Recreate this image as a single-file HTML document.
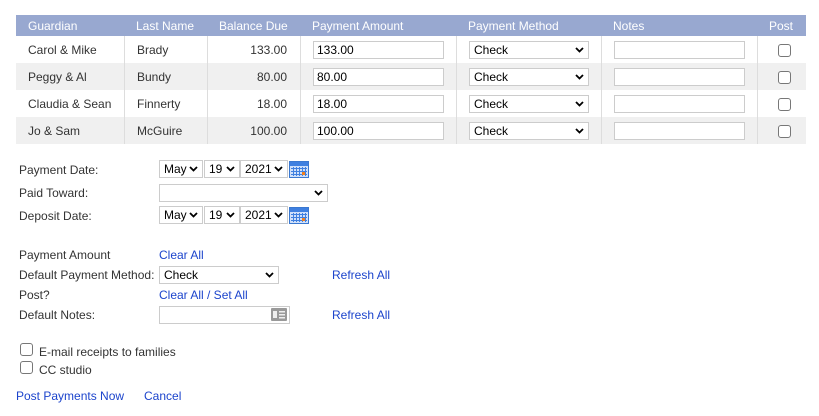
<!DOCTYPE html>
<html><head><style>
*{box-sizing:border-box;margin:0;padding:0}
body{width:819px;height:416px;background:#fff;font-family:"Liberation Sans",Arial,sans-serif;font-size:12px;color:#333;position:relative;overflow:hidden}
.a{position:absolute;white-space:nowrap}
.hdr{position:absolute;left:16px;top:15px;width:790px;height:21px;background:#98a8d0}
.hdr span{position:absolute;top:4px;color:#fff;font-size:12px}
.row{position:absolute;left:16px;width:790px;height:27px}
.vl{position:absolute;top:36px;height:108px;width:1px;background:#ddd}
.inp{position:absolute;height:18px;border:1px solid #ccc;background:#fff;font-size:12px;color:#000;padding:1px 3px;line-height:14px}
.sel{position:absolute;height:18px;border:1px solid #ccc;background:#fff;font-size:12px;color:#000;padding:1px 4px;line-height:14px}
.sel svg{position:absolute;right:4px;top:5px}
.cb{position:absolute;width:13px;height:13px;border:1px solid #777;border-radius:3px;background:#fff}
.lnk{color:#1c44cc}
</style></head><body>
<div class="hdr">
<span style="left:12px">Guardian</span><span style="left:120px">Last Name</span><span style="left:203px">Balance Due</span><span style="left:296px">Payment Amount</span><span style="left:452px">Payment Method</span><span style="left:597px">Notes</span><span style="left:753px">Post</span>
</div>
<div class="row" style="top:36px;background:#fff"></div>
<div class="row" style="top:63px;background:#f0f0f0"></div>
<div class="row" style="top:90px;background:#fff"></div>
<div class="row" style="top:117px;background:#f0f0f0"></div>
<div class="vl" style="left:124px"></div><div class="vl" style="left:207px"></div><div class="vl" style="left:300px"></div><div class="vl" style="left:456px"></div><div class="vl" style="left:601px"></div><div class="vl" style="left:757px"></div>

<div class="a" style="left:28px;top:43px">Carol &amp; Mike</div><div class="a" style="left:137px;top:43px">Brady</div><div class="a" style="right:532px;top:43px">133.00</div>
<div class="a" style="left:28px;top:70px">Peggy &amp; Al</div><div class="a" style="left:137px;top:70px">Bundy</div><div class="a" style="right:532px;top:70px">80.00</div>
<div class="a" style="left:28px;top:97px">Claudia &amp; Sean</div><div class="a" style="left:137px;top:97px">Finnerty</div><div class="a" style="right:532px;top:97px">18.00</div>
<div class="a" style="left:28px;top:124px">Jo &amp; Sam</div><div class="a" style="left:137px;top:124px">McGuire</div><div class="a" style="right:532px;top:124px">100.00</div>

<div class="inp" style="left:313px;top:41px;width:131px">133.00</div>
<div class="inp" style="left:313px;top:68px;width:131px">80.00</div>
<div class="inp" style="left:313px;top:95px;width:131px">18.00</div>
<div class="inp" style="left:313px;top:122px;width:131px">100.00</div>

<div class="sel" style="left:469px;top:41px;width:120px">Check<svg width="9" height="6"><path d="M1 1L4.5 4.5L8 1" stroke="#000" stroke-width="1.8" fill="none"/></svg></div>
<div class="sel" style="left:469px;top:68px;width:120px">Check<svg width="9" height="6"><path d="M1 1L4.5 4.5L8 1" stroke="#000" stroke-width="1.8" fill="none"/></svg></div>
<div class="sel" style="left:469px;top:95px;width:120px">Check<svg width="9" height="6"><path d="M1 1L4.5 4.5L8 1" stroke="#000" stroke-width="1.8" fill="none"/></svg></div>
<div class="sel" style="left:469px;top:122px;width:120px">Check<svg width="9" height="6"><path d="M1 1L4.5 4.5L8 1" stroke="#000" stroke-width="1.8" fill="none"/></svg></div>

<div class="inp" style="left:614px;top:41px;width:131px"></div>
<div class="inp" style="left:614px;top:68px;width:131px"></div>
<div class="inp" style="left:614px;top:95px;width:131px"></div>
<div class="inp" style="left:614px;top:122px;width:131px"></div>

<div class="cb" style="left:778px;top:44px"></div><div class="cb" style="left:778px;top:71px"></div><div class="cb" style="left:778px;top:98px"></div><div class="cb" style="left:778px;top:125px"></div>

<div class="a" style="left:19px;top:163px">Payment Date:</div>
<div class="a" style="left:19px;top:186px">Paid Toward:</div>
<div class="a" style="left:19px;top:209px">Deposit Date:</div>

<div class="sel" style="left:159px;top:160px;width:44px">May<svg width="9" height="6"><path d="M1 1L4.5 4.5L8 1" stroke="#000" stroke-width="1.8" fill="none"/></svg></div>
<div class="sel" style="left:204px;top:160px;width:36px">19<svg width="9" height="6"><path d="M1 1L4.5 4.5L8 1" stroke="#000" stroke-width="1.8" fill="none"/></svg></div>
<div class="sel" style="left:240px;top:160px;width:48px">2021<svg width="9" height="6"><path d="M1 1L4.5 4.5L8 1" stroke="#000" stroke-width="1.8" fill="none"/></svg></div>
<svg class="a" style="left:289px;top:161px" width="20" height="17"><rect x="0.5" y="0.5" width="19" height="16" fill="#cfe0fa" stroke="#3a78d0"/><rect x="1" y="1" width="18" height="4" fill="#3f80e0"/><g stroke="#3f80e0" stroke-width="1"><path d="M2 7.5H18M2 10.5H18M2 13.5H18M4.5 6V15M7.5 6V15M10.5 6V15M13.5 6V15M16.5 6V15"/></g><rect x="13" y="11" width="3" height="3" fill="#f08020"/></svg>
<div class="sel" style="left:159px;top:184px;width:169px"><svg width="9" height="6"><path d="M1 1L4.5 4.5L8 1" stroke="#000" stroke-width="1.8" fill="none"/></svg></div>
<div class="sel" style="left:159px;top:206px;width:44px">May<svg width="9" height="6"><path d="M1 1L4.5 4.5L8 1" stroke="#000" stroke-width="1.8" fill="none"/></svg></div>
<div class="sel" style="left:204px;top:206px;width:36px">19<svg width="9" height="6"><path d="M1 1L4.5 4.5L8 1" stroke="#000" stroke-width="1.8" fill="none"/></svg></div>
<div class="sel" style="left:240px;top:206px;width:48px">2021<svg width="9" height="6"><path d="M1 1L4.5 4.5L8 1" stroke="#000" stroke-width="1.8" fill="none"/></svg></div>
<svg class="a" style="left:289px;top:207px" width="20" height="17"><rect x="0.5" y="0.5" width="19" height="16" fill="#cfe0fa" stroke="#3a78d0"/><rect x="1" y="1" width="18" height="4" fill="#3f80e0"/><g stroke="#3f80e0" stroke-width="1"><path d="M2 7.5H18M2 10.5H18M2 13.5H18M4.5 6V15M7.5 6V15M10.5 6V15M13.5 6V15M16.5 6V15"/></g><rect x="13" y="11" width="3" height="3" fill="#f08020"/></svg>

<div class="a" style="left:19px;top:248px">Payment Amount</div>
<div class="a lnk" style="left:159px;top:248px">Clear All</div>
<div class="a" style="left:19px;top:268px">Default Payment Method:</div>
<div class="sel" style="left:159px;top:266px;width:120px">Check<svg width="9" height="6"><path d="M1 1L4.5 4.5L8 1" stroke="#000" stroke-width="1.8" fill="none"/></svg></div>
<div class="a lnk" style="left:332px;top:268px">Refresh All</div>
<div class="a" style="left:19px;top:288px">Post?</div>
<div class="a lnk" style="left:159px;top:288px">Clear All / Set All</div>
<div class="a" style="left:19px;top:308px">Default Notes:</div>
<div class="inp" style="left:159px;top:306px;width:131px"></div>
<svg class="a" style="left:271px;top:308px" width="16" height="13"><rect width="16" height="13" rx="1" fill="#999"/><rect x="2" y="3" width="4" height="7" fill="#eee"/><rect x="8" y="3" width="6" height="1.5" fill="#eee"/><rect x="8" y="6" width="6" height="1.5" fill="#eee"/><rect x="8" y="9" width="6" height="1.5" fill="#eee"/></svg>
<div class="a lnk" style="left:332px;top:308px">Refresh All</div>

<div class="cb" style="left:20px;top:343px"></div>
<div class="a" style="left:39px;top:345px">E-mail receipts to families</div>
<div class="cb" style="left:20px;top:361px"></div>
<div class="a" style="left:39px;top:363px">CC studio</div>

<div class="a lnk" style="left:16px;top:389px">Post Payments Now</div>
<div class="a lnk" style="left:144px;top:389px">Cancel</div>
</body></html>
